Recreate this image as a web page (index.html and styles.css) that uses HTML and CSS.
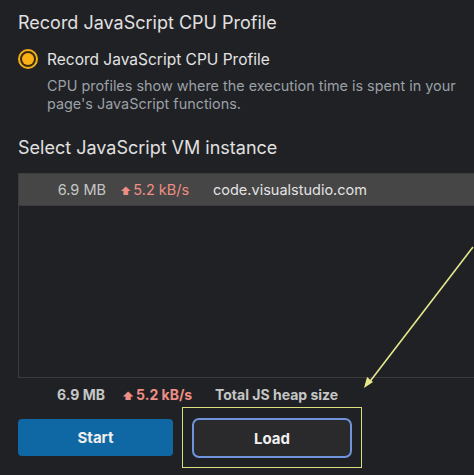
FILE: index.html
```html
<!DOCTYPE html>
<html>
<head>
<meta charset="utf-8">
<link rel="stylesheet" href="styles.css">
</head>
<body>
<div class="page">
  <h2 class="heading">Record JavaScript CPU Profile</h2>
  <div class="option">
    <span class="radio"><span class="dot"></span></span>
    <span class="option-label">Record JavaScript CPU Profile</span>
  </div>
  <p class="desc">CPU profiles show where the execution time is spent in your page's JavaScript functions.</p>

  <h2 class="heading heading-vm">Select JavaScript VM instance</h2>
  <div class="list">
    <div class="row selected">
      <span class="size">6.9 MB</span>
      <span class="rate"><span class="up">⬆</span>5.2 kB/s</span>
      <span class="name">code.visualstudio.com</span>
    </div>
  </div>
  <div class="totals">
    <span class="size">6.9 MB</span>
    <span class="rate"><span class="up">⬆</span>5.2 kB/s</span>
    <span class="name">Total JS heap size</span>
  </div>
  <div class="buttons">
    <button class="btn btn-start">Start</button>
    <div class="highlight"><button class="btn btn-load">Load</button></div>
  </div>
  <svg class="arrow" width="474" height="475" viewBox="0 0 474 475">
    <line x1="473" y1="247" x2="368" y2="384" stroke="#e6e88c" stroke-width="1.6"/>
    <path d="M364 388 L367 377 L373 382 Z" fill="#e6e88c"/>
  </svg>
</div>
</body>
</html>
```

FILE: styles.css
```css
html, body {
  margin: 0;
  padding: 0;
  background: #202124;
}
.page {
  position: relative;
  width: 474px;
  height: 475px;
  overflow: hidden;
  font-family: Inter, Roboto, "Noto Sans", sans-serif;
  color: #e3e3e3;
  padding-left: 18px;
  box-sizing: border-box;
}
.heading {
  margin: 0;
  font-size: 18px;
  font-weight: 400;
  line-height: 22px;
  padding-top: 12px;
  color: #e0e0e0;
}
.heading-vm {
  padding-top: 0;
  margin-top: 24px;
}
.option {
  display: flex;
  align-items: center;
  margin-top: 14px;
  height: 22px;
}
.radio {
  width: 20px;
  height: 20px;
  box-sizing: border-box;
  border-radius: 50%;
  border: 2px solid #f2b01c;
  background: #3a2a10;
  display: flex;
  align-items: center;
  justify-content: center;
}
.dot {
  width: 12px;
  height: 12px;
  border-radius: 50%;
  background: #fbb118;
}
.option-label {
  margin-left: 9px;
  font-size: 15.5px;
  color: #e3e3e3;
}
.desc {
  margin: 7px 0 0 29px;
  font-size: 14.4px;
  line-height: 18px;
  color: #9aa0a6;
  width: 430px;
}
.list {
  margin-top: 14px;
  height: 205px;
  border: 1px solid #3c3c3f;
  border-right: none;
  box-sizing: border-box;
}
.row {
  display: flex;
  align-items: center;
  height: 31px;
  font-size: 14.5px;
}
.row.selected {
  background: #464646;
  border-bottom: 1px solid #3c3c3f;
}
.size {
  width: 87px;
  text-align: right;
  color: #c4c7c5;
}
.rate {
  margin-left: 14px;
  width: 80px;
  color: #ee8e84;
}
.up {
  font-size: 11px;
  margin-right: 2px;
}
.name {
  margin-left: 13px;
  color: #e3e3e3;
}
.totals {
  display: flex;
  align-items: center;
  height: 30px;
  margin-top: 1px;
  font-size: 14px;
  font-weight: 700;
}
.totals .rate {
  margin-left: 17px;
  width: 78px;
  color: #ee8e84;
}
.totals .size { color: #c4c7c5; }
.totals .name { color: #c4c7c5; margin-left: 15px; }
.buttons {
  display: flex;
  align-items: center;
  margin-top: -2px;
}
.btn {
  font-family: Inter, Roboto, "Noto Sans", sans-serif;
  font-size: 15px;
  font-weight: 700;
  color: #f0f0f0;
  cursor: pointer;
}
.btn-start {
  width: 155px;
  height: 37px;
  border: none;
  border-radius: 4px;
  background: #0f67a3;
}
.highlight {
  margin-left: 9px;
  border: 1.5px solid #dcde7e;
  padding: 10px 9px 9px 9px;
}
.btn-load {
  display: block;
  width: 160px;
  height: 40px;
  border: 2px solid #6f94dc;
  border-radius: 7px;
  background: #2a2a2c;
}
.arrow {
  position: absolute;
  left: 0;
  top: 0;
  pointer-events: none;
}
```
